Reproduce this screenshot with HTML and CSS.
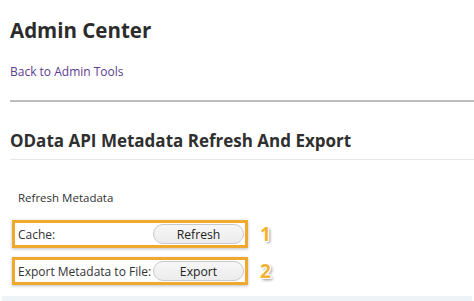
FILE: index.html
```html
<!DOCTYPE html>
<html>
<head>
<meta charset="utf-8">
<link rel="stylesheet" href="styles.css">
</head>
<body>
<div class="page">
  <h1 class="title">Admin Center</h1>
  <a class="back" href="#">Back to Admin Tools</a>
  <hr class="rule-thick">
  <h2 class="subtitle">OData API Metadata Refresh And Export</h2>
  <hr class="rule-thin">
  <div class="section">
    <div class="section-label">Refresh Metadata</div>
    <div class="row-wrap">
      <div class="row">
        <span class="row-label">Cache:</span>
        <button class="pill">Refresh</button>
      </div>
      <span class="marker">1</span>
    </div>
    <div class="row-wrap">
      <div class="row">
        <span class="row-label">Export Metadata to File:</span>
        <button class="pill">Export</button>
      </div>
      <span class="marker">2</span>
    </div>
  </div>
  <div class="footer-strip"></div>
</div>
</body>
</html>
```
FILE: styles.css
```css
html, body {
  margin: 0;
  padding: 0;
  background: #ffffff;
}
body {
  font-family: "Open Sans", Lato, "Liberation Sans", sans-serif;
  color: #32363a;
  width: 474px;
  height: 301px;
  overflow: hidden;
}
.page {
  display: flex;
  flex-direction: column;
  padding-top: 17px;
}
.title {
  margin: 0 0 0 10px;
  font-size: 20.5px;
  line-height: 26px;
  font-weight: 700;
  color: #2b2b2b;
}
.back {
  margin: 21px 0 0 10px;
  font-size: 12px;
  line-height: 16px;
  color: #5c3d8f;
  text-decoration: none;
}
.rule-thick {
  margin: 20px 0 0 10px;
  border: 0;
  height: 2px;
  background: #bdbdbd;
}
.subtitle {
  margin: 28px 0 0 10px;
  font-size: 17px;
  line-height: 22px;
  font-weight: 700;
  color: #2f2f2f;
}
.rule-thin {
  margin: 7px 0 0 10px;
  border: 0;
  height: 1px;
  background: #e6e6e6;
}
.section {
  display: flex;
  flex-direction: column;
  padding: 31px 0 0 12px;
  gap: 9px;
}
.section-label {
  font-size: 11.5px;
  line-height: 14px;
  color: #333;
  padding-left: 6px;
  margin-bottom: 6px;
}
.row-wrap {
  display: flex;
  align-items: center;
  gap: 12px;
  height: 28px;
}
.row {
  box-sizing: border-box;
  width: 236px;
  height: 28px;
  border: 3px solid #f0a92e;
  box-shadow: 0 1px 3px rgba(0,0,0,0.25);
  display: flex;
  align-items: center;
  justify-content: space-between;
  padding: 0 0 0 3px;
  background: #fff;
}
.row-label {
  font-size: 12px;
  color: #333;
  white-space: nowrap;
}
.pill {
  flex-shrink: 0;
  width: 91px;
  height: 20px;
  border-radius: 10px;
  border: 1px solid #c9c9c9;
  background: linear-gradient(#f7f7f7, #ececec);
  font-family: inherit;
  font-size: 12.2px;
  color: #222;
  padding: 0;
  margin-right: 1px;
}
.marker {
  font-size: 19px;
  line-height: 20px;
  font-weight: 700;
  color: #f2b234;
  text-shadow: 1px 0 0 #fff, -1px 0 0 #fff, 0 1px 0 #fff, 0 -1px 0 #fff, 1px 1px 0 #fff, -1px -1px 0 #fff, 2px 2px 3px rgba(0,0,0,0.45);
}
.footer-strip {
  margin: 11px 2px 0 2px;
  height: 8px;
  background: #eef3f8;
}
```
